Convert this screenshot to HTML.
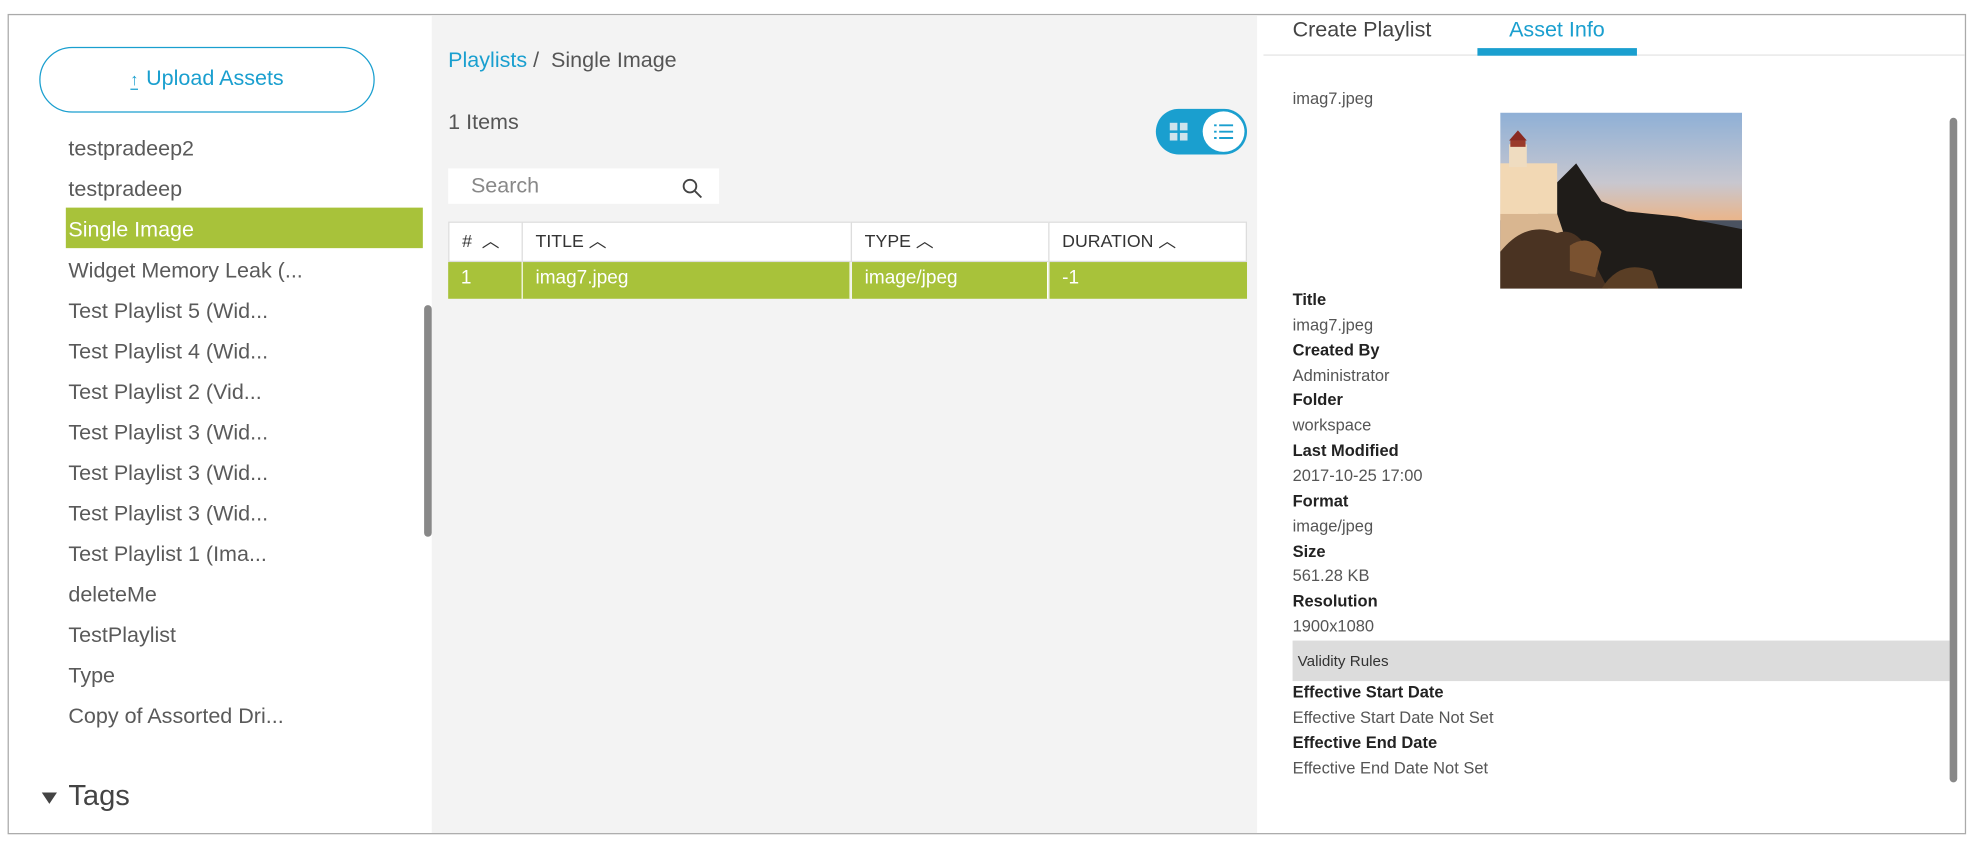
<!DOCTYPE html>
<html><head><meta charset="utf-8"><style>
html,body{margin:0;padding:0;width:1975px;height:850px;overflow:hidden;background:#fff}
#w{position:absolute;left:0;top:0;width:1560px;height:672px;transform:scale(1.266);transform-origin:0 0;font-family:"Liberation Sans",sans-serif;color:#555}
.a{position:absolute;white-space:nowrap}
.li{position:absolute;left:54px;font-size:17px;color:#5a5a5a;line-height:20px}
.lb{position:absolute;left:1021px;font-size:13px;font-weight:bold;color:#222;line-height:16px}
.vl{position:absolute;left:1021px;font-size:13px;color:#555;line-height:16px}
.th{position:absolute;top:175px;height:32px;border:1px solid #ddd;box-sizing:border-box;font-size:14px;color:#333;line-height:28px;padding-left:10px;background:#fff}
.td{position:absolute;top:207px;height:29px;background:#a8c23a;color:#fff;font-size:15px;line-height:26px;padding-left:10px;box-sizing:border-box;border-right:1px solid #fff}
</style></head><body><div id="w">
<div class="a" style="left:6px;top:11px;width:1547px;height:648px;border:1.5px solid #aaa;box-sizing:border-box"></div>
<div class="a" style="left:341px;top:12px;width:652px;height:646px;background:#f3f3f3"></div>
<div class="a" style="left:31px;top:37px;width:265px;height:52px;border:1.5px solid #1a9fcf;border-radius:27px;box-sizing:border-box;color:#1a9fcf;font-size:17px;text-align:center;line-height:48px"><span style="display:inline-block;border-bottom:1.5px solid #1a9fcf;line-height:14px;font-size:13px;margin-right:6px">↑</span>Upload Assets</div>
<div class="li" style="top:108px">testpradeep2</div>
<div class="li" style="top:140px">testpradeep</div>
<div class="a" style="left:52px;top:164px;width:282px;height:32px;background:#a8c23a"></div>
<div class="li" style="top:172px;color:#fff">Single Image</div>
<div class="li" style="top:204px">Widget Memory Leak (...</div>
<div class="li" style="top:236px">Test Playlist 5 (Wid...</div>
<div class="li" style="top:268px">Test Playlist 4 (Wid...</div>
<div class="li" style="top:300px">Test Playlist 2 (Vid...</div>
<div class="li" style="top:332px">Test Playlist 3 (Wid...</div>
<div class="li" style="top:364px">Test Playlist 3 (Wid...</div>
<div class="li" style="top:396px">Test Playlist 3 (Wid...</div>
<div class="li" style="top:428px">Test Playlist 1 (Ima...</div>
<div class="li" style="top:460px">deleteMe</div>
<div class="li" style="top:492px">TestPlaylist</div>
<div class="li" style="top:524px">Type</div>
<div class="li" style="top:556px">Copy of Assorted Dri...</div>
<div class="a" style="left:335px;top:241px;width:6px;height:183px;background:#888;border-radius:3px"></div>
<div class="a" style="left:33px;top:626px;width:0;height:0;border-left:6px solid transparent;border-right:6px solid transparent;border-top:9px solid #444"></div>
<div class="a" style="left:54px;top:615px;font-size:23px;color:#444">Tags</div>
<div class="a" style="left:354px;top:38px;font-size:17px"><span style="color:#1a9fcf">Playlists</span> / &nbsp;Single Image</div>
<div class="a" style="left:354px;top:87px;font-size:17px">1 Items</div>
<div class="a" style="left:913px;top:86px;width:72px;height:36px;background:#1a9fcf;border-radius:18px"></div>
<div class="a" style="left:923px;top:96px;width:16px;height:16px"><svg width="16" height="16"><rect x="1" y="1" width="6" height="6" fill="#cfe3ec"/><rect x="9" y="1" width="6" height="6" fill="#cfe3ec"/><rect x="1" y="9" width="6" height="6" fill="#cfe3ec"/><rect x="9" y="9" width="6" height="6" fill="#cfe3ec"/></svg></div>
<div class="a" style="left:950px;top:88px;width:33px;height:32px;background:#fff;border-radius:50%"></div>
<div class="a" style="left:958px;top:96px"><svg width="18" height="16" stroke="#1a9fcf" stroke-width="1.5"><line x1="1" y1="3" x2="3" y2="3"/><line x1="5" y1="3" x2="16" y2="3"/><line x1="1" y1="8" x2="3" y2="8"/><line x1="5" y1="8" x2="16" y2="8"/><line x1="1" y1="13" x2="3" y2="13"/><line x1="5" y1="13" x2="16" y2="13"/></svg></div>
<div class="a" style="left:354px;top:133px;width:214px;height:28px;background:#fff"></div>
<div class="a" style="left:372px;top:137px;font-size:17px;color:#888">Search</div>
<div class="a" style="left:538px;top:140px"><svg width="18" height="18" fill="none" stroke="#444" stroke-width="1.5"><circle cx="7" cy="7" r="5"/><line x1="11" y1="11" x2="16" y2="16"/></svg></div>
<div class="th" style="left:354px;width:59px">#&nbsp; ︿</div>
<div class="th" style="left:412px;width:261px">TITLE ︿</div>
<div class="th" style="left:672px;width:157px">TYPE ︿</div>
<div class="th" style="left:828px;width:157px">DURATION ︿</div>
<div class="td" style="left:354px;width:59px">1</div>
<div class="td" style="left:413px;width:259px">imag7.jpeg</div>
<div class="td" style="left:673px;width:155px">image/jpeg</div>
<div class="td" style="left:829px;width:156px;border:none">-1</div>
<div class="a" style="left:1021px;top:14px;font-size:17px;color:#444">Create Playlist</div>
<div class="a" style="left:1192px;top:14px;font-size:17px;color:#1a9fcf">Asset Info</div>
<div class="a" style="left:998px;top:43px;width:554px;height:1px;background:#e3e3e3"></div>
<div class="a" style="left:1167px;top:38px;width:126px;height:6px;background:#1a9fcf"></div>
<div class="a" style="left:1021px;top:70px;font-size:13px">imag7.jpeg</div>
<div class="a" style="left:1185px;top:89px;width:191px;height:139px"><svg width="191" height="139"><defs><linearGradient id="s" x1="0" y1="0" x2="0" y2="1"><stop offset="0" stop-color="#8fb0d6"/><stop offset=".4" stop-color="#c8c7cf"/><stop offset=".6" stop-color="#e8b68e"/></linearGradient></defs><rect width="191" height="139" fill="url(#s)"/><rect x="0" y="85" width="191" height="54" fill="#4a5260"/><path d="M40 60 L60 40 L80 70 L100 78 L140 82 L191 92 L191 139 L0 139Z" fill="#1f1c19"/><rect x="0" y="40" width="45" height="40" fill="#f2d8b4"/><rect x="7" y="25" width="14" height="18" fill="#efdcc0"/><rect x="8" y="22" width="12" height="5" fill="#9a3a2a"/><path d="M7 22 L14 14 L21 22Z" fill="#8a2a22"/><path d="M0 80 L45 80 L50 95 L0 110Z" fill="#d9b690"/><path d="M0 110 Q20 85 45 95 Q60 90 70 110 L85 139 L0 139Z" fill="#4a3322"/><path d="M55 105 Q70 95 80 110 L75 130 L55 125Z" fill="#7a5230"/><path d="M80 139 Q95 115 120 125 L125 139Z" fill="#5a3e25"/></svg></div>
<div class="lb" style="top:229px">Title</div><div class="vl" style="top:249px">imag7.jpeg</div>
<div class="lb" style="top:269px">Created By</div><div class="vl" style="top:289px">Administrator</div>
<div class="lb" style="top:308px">Folder</div><div class="vl" style="top:328px">workspace</div>
<div class="lb" style="top:348px">Last Modified</div><div class="vl" style="top:368px">2017-10-25 17:00</div>
<div class="lb" style="top:388px">Format</div><div class="vl" style="top:408px">image/jpeg</div>
<div class="lb" style="top:428px">Size</div><div class="vl" style="top:447px">561.28 KB</div>
<div class="lb" style="top:467px">Resolution</div><div class="vl" style="top:487px">1900x1080</div>
<div class="a" style="left:1021px;top:506px;width:519px;height:32px;background:#dcdcdc;font-size:12px;color:#333;line-height:32px;padding-left:4px;box-sizing:border-box">Validity Rules</div>
<div class="lb" style="top:539px">Effective Start Date</div><div class="vl" style="top:559px">Effective Start Date Not Set</div>
<div class="lb" style="top:579px">Effective End Date</div><div class="vl" style="top:599px">Effective End Date Not Set</div>
<div class="a" style="left:1540px;top:93px;width:6px;height:525px;background:#888;border-radius:3px"></div>
</div></body></html>
